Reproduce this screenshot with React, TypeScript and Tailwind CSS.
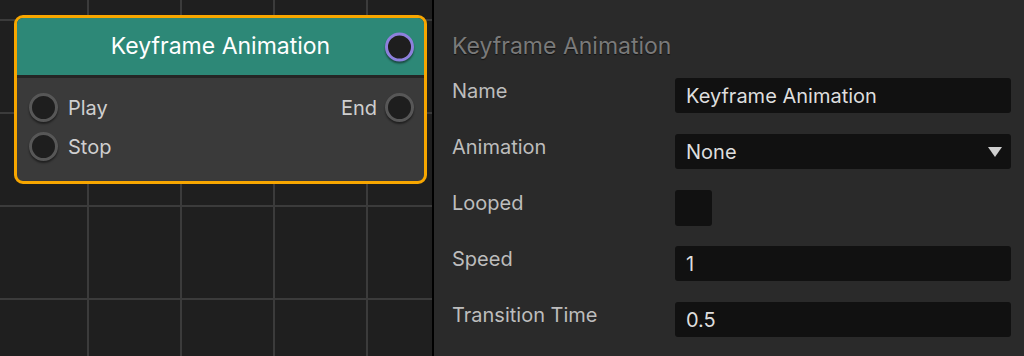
import React from "react";

const FONT = "font-['Inter','Noto_Sans',sans-serif]";

function Socket({ ring = "border-[#575757]" }: { ring?: string }) {
  return (
    <div
      className={`w-[29px] h-[29px] rounded-full border-[3px] ${ring} bg-[#1e1e1e] shadow-[0_2px_2px_rgba(0,0,0,0.45)] shrink-0`}
    />
  );
}

function GraphNode() {
  return (
    <div className="w-[413px] h-[169px] rounded-[9px] border-[3px] border-[#f7a600] overflow-hidden flex flex-col bg-[#3a3a3a]">
      {/* Header */}
      <div className="relative h-[57px] bg-[#2d8877] flex items-center justify-center shrink-0">
        <span className="text-white text-[23px] leading-none">Keyframe Animation</span>
        <div className="absolute right-[10px] top-1/2 -translate-y-1/2">
          <Socket ring="border-[#8d80dd]" />
        </div>
      </div>
      <div className="h-[3px] bg-[#252525] shrink-0" />

      {/* Ports */}
      <div className="flex justify-between pt-[15px] pl-[12px] pr-[10px]">
        <div className="flex flex-col gap-[10px]">
          <div className="flex items-center gap-[10px]">
            <Socket />
            <span className="text-[#cfcfcf] text-[20px] leading-none">Play</span>
          </div>
          <div className="flex items-center gap-[10px]">
            <Socket />
            <span className="text-[#cfcfcf] text-[20px] leading-none">Stop</span>
          </div>
        </div>
        <div className="flex items-center gap-[8px] self-start">
          <span className="text-[#cfcfcf] text-[20px] leading-none">End</span>
          <Socket />
        </div>
      </div>
    </div>
  );
}

function Field({ label, children }: { label: string; children: React.ReactNode }) {
  return (
    <div className="flex h-[56px] items-start">
      <div className="w-[223px] shrink-0 pt-[1px] text-[#bdbdbd] text-[20px] leading-[24px]">{label}</div>
      <div className="flex-1">{children}</div>
    </div>
  );
}

function TextBox({ value }: { value: string }) {
  return (
    <div className="h-[35px] rounded-[3px] bg-[#111111] pl-[11px] flex items-center text-[#dedede] text-[20px]">
      {value}
    </div>
  );
}

export default function App() {
  return (
    <div className={`w-[1024px] h-[356px] flex bg-black overflow-hidden ${FONT}`}>
      {/* Graph canvas */}
      <div className="w-[432px] h-full bg-[#1f1f1f] bg-[linear-gradient(to_right,#3b3b3b_2px,transparent_2px),linear-gradient(to_bottom,#3b3b3b_2px,transparent_2px)] bg-[size:93px_93px] bg-[position:-6px_19px] pt-[15px] pl-[14px] shrink-0">
        <GraphNode />
      </div>
      <div className="w-[2px] bg-black shrink-0" />

      {/* Inspector */}
      <div className="flex-1 h-full bg-[#2a2a2a] pl-[18px] pr-[13px] pt-[32px]">
        <div className="text-[#7a7a7a] text-[23px] leading-[28px] mb-[18px] [text-shadow:0_1px_1px_rgba(0,0,0,0.6)]">
          Keyframe Animation
        </div>
        <Field label="Name">
          <TextBox value="Keyframe Animation" />
        </Field>
        <Field label="Animation">
          <div className="h-[35px] rounded-[3px] bg-[#111111] pl-[11px] pr-[9px] flex items-center justify-between text-[#dedede] text-[20px]">
            <span>None</span>
            <svg width="14" height="10" viewBox="0 0 14 10">
              <path d="M0 0 H14 L7 10 Z" fill="#cfcfcf" />
            </svg>
          </div>
        </Field>
        <Field label="Looped">
          <div className="w-[37px] h-[36px] rounded-[3px] bg-[#111111]" />
        </Field>
        <Field label="Speed">
          <TextBox value="1" />
        </Field>
        <Field label="Transition Time">
          <TextBox value="0.5" />
        </Field>
      </div>
    </div>
  );
}
